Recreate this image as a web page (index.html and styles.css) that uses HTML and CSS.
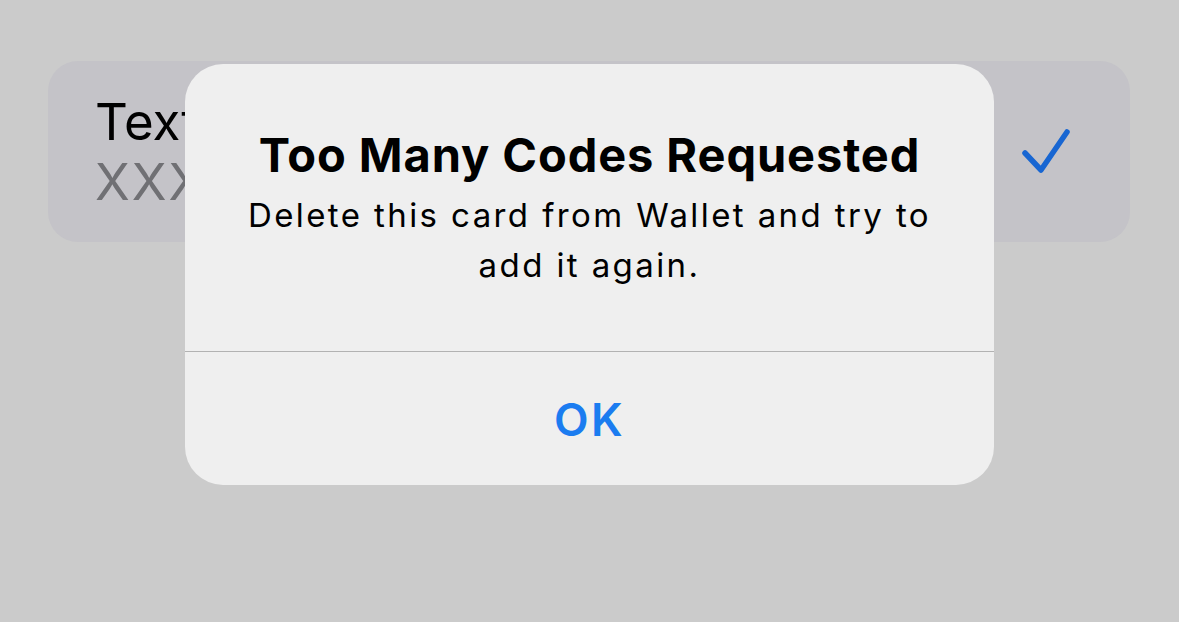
FILE: index.html
```html
<!DOCTYPE html>
<html lang="en">
<head>
    <meta charset="UTF-8">
    <meta name="viewport" content="width=device-width, initial-scale=1.0">
    <title>Wallet</title>
    <link rel="stylesheet" href="styles.css">
</head>
<body>
    <div class="screen">
        <div class="card-row">
            <div class="card-text">
                <div class="card-title">Text</div>
                <div class="card-sub">XXXX</div>
            </div>
            <svg class="check" width="52" height="52" viewBox="0 0 52 52">
                <path d="M5 27 L21 44 L47 6" fill="none" stroke="#1866d2" stroke-width="5.5" stroke-linecap="round" stroke-linejoin="round"/>
            </svg>
        </div>

        <div class="alert">
            <div class="alert-body">
                <h2>Too Many Codes Requested</h2>
                <p>Delete this card from Wallet and try to add it again.</p>
            </div>
            <div class="alert-btn">OK</div>
        </div>
    </div>
</body>
</html>
```

FILE: styles.css
```css
body {
    margin: 0;
    padding: 0;
    background: #cbcbcb;
    font-family: Inter, "Noto Sans", sans-serif;
}
.screen {
    position: relative;
    width: 1179px;
    height: 622px;
    overflow: hidden;
}
.card-row {
    margin: 61px 49px 0 48px;
    height: 181px;
    background: #c4c3c8;
    border-radius: 30px;
    display: flex;
    align-items: center;
    justify-content: space-between;
    padding: 0 60px 0 47px;
    box-sizing: border-box;
}
.card-title {
    font-size: 51px;
    line-height: 60px;
    color: #000;
}
.card-sub {
    font-size: 51px;
    line-height: 60px;
    color: #707074;
    letter-spacing: 2px;
}
.check {
    margin-top: 0;
    margin-right: -2px;
}
.alert {
    position: absolute;
    left: 185px;
    top: 64px;
    width: 809px;
    height: 421px;
    background: #efefef;
    border-radius: 38px;
    display: flex;
    flex-direction: column;
    overflow: hidden;
}
.alert-body {
    height: 288px;
    border-bottom: 1px solid #b2b2b2;
    text-align: center;
    padding: 61px 20px 0;
    box-sizing: border-box;
}
.alert-body h2 {
    margin: 0;
    font-size: 47px;
    font-weight: 700;
    line-height: 60px;
    letter-spacing: 0.9px;
}
.alert-body p {
    margin: 5px 0 0;
    font-size: 33px;
    line-height: 50px;
    letter-spacing: 2.4px;
    padding: 0 20px;
}
.alert-btn {
    flex: 1;
    display: flex;
    align-items: center;
    justify-content: center;
    color: #1b7cf0;
    font-size: 45px;
    font-weight: 600;
    letter-spacing: 2.5px;
    padding-top: 2px;
}
```
